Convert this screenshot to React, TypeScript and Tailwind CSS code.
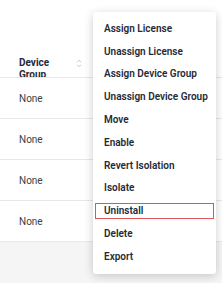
import React from "react";

const actions = [
  "Assign License",
  "Unassign License",
  "Assign Device Group",
  "Unassign Device Group",
  "Move",
  "Enable",
  "Revert Isolation",
  "Isolate",
  "Uninstall",
  "Delete",
  "Export",
];

function SortIcon() {
  return (
    <svg width="6" height="9" viewBox="0 0 6 9" className="text-[#c4c7cc]">
      <path d="M1 3.2 L3 1.2 L5 3.2" fill="none" stroke="currentColor" strokeWidth="1" />
      <path d="M1 5.8 L3 7.8 L5 5.8" fill="none" stroke="currentColor" strokeWidth="1" />
    </svg>
  );
}

export default function App() {
  return (
    <div className="relative w-[222px] h-[283px] overflow-hidden bg-white font-['Roboto',sans-serif]">
      <div className="flex flex-col">
        <div className="h-[78px] border-b border-[#e6e8eb] overflow-hidden flex pt-[57px] pl-[19px]">
          <div className="w-[57px] text-[10px] leading-[12px] font-bold text-[#1f2a37]">
            Device
            <br />
            Group
          </div>
          <div className="pt-[2px]">
            <SortIcon />
          </div>
        </div>
        {[0, 1, 2, 3].map((i) => (
          <div
            key={i}
            className="h-[41px] border-b border-[#e6e8eb] flex items-center pl-[19px] text-[10px] text-[#3a3f45]"
          >
            None
          </div>
        ))}
        <div className="h-[42px] bg-[#f5f5f6]" />
      </div>

      <ul className="absolute left-[93px] top-[12px] w-[123px] h-[262px] bg-white rounded-[3px] shadow-[0_2px_10px_rgba(0,0,0,0.2)] py-[5px]">
        {actions.map((a) => (
          <li key={a} className="h-[22.8px] px-[2px] flex items-center">
            {a === "Uninstall" ? (
              <span className="w-full h-[16px] border border-[#e0575b] pl-[8px] flex items-center text-[10px] font-semibold text-[#1f2a37]">
                {a}
              </span>
            ) : (
              <span className="pl-[9px] text-[10px] font-semibold text-[#1f2a37] whitespace-nowrap">
                {a}
              </span>
            )}
          </li>
        ))}
      </ul>
    </div>
  );
}
